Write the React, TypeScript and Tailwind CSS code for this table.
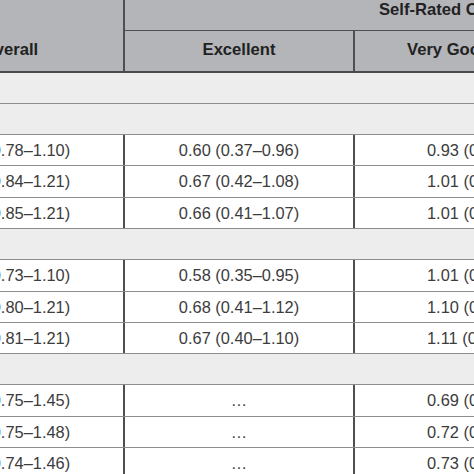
import React from 'react';

type Row =
  | { kind: 'group' }
  | { kind: 'data'; overall: string; excellent: string; veryGood: string };

const rows: Row[] = [
  { kind: 'group' },
  { kind: 'group' },
  { kind: 'data', overall: '0.93 (0.78–1.10)', excellent: '0.60 (0.37–0.96)', veryGood: '0.93 (0.74–1.16)' },
  { kind: 'data', overall: '1.01 (0.84–1.21)', excellent: '0.67 (0.42–1.08)', veryGood: '1.01 (0.80–1.27)' },
  { kind: 'data', overall: '1.01 (0.85–1.21)', excellent: '0.66 (0.41–1.07)', veryGood: '1.01 (0.80–1.27)' },
  { kind: 'group' },
  { kind: 'data', overall: '0.90 (0.73–1.10)', excellent: '0.58 (0.35–0.95)', veryGood: '1.01 (0.79–1.29)' },
  { kind: 'data', overall: '0.99 (0.80–1.21)', excellent: '0.68 (0.41–1.12)', veryGood: '1.10 (0.86–1.41)' },
  { kind: 'data', overall: '0.99 (0.81–1.21)', excellent: '0.67 (0.40–1.10)', veryGood: '1.11 (0.86–1.43)' },
  { kind: 'group' },
  { kind: 'data', overall: '1.04 (0.75–1.45)', excellent: '…', veryGood: '0.69 (0.41–1.16)' },
  { kind: 'data', overall: '1.05 (0.75–1.48)', excellent: '…', veryGood: '0.72 (0.43–1.21)' },
  { kind: 'data', overall: '1.04 (0.74–1.46)', excellent: '…', veryGood: '0.73 (0.43–1.23)' },
];

export default function App() {
  return (
    <div className="w-[474px] h-[474px] overflow-hidden bg-white font-['Liberation_Sans',Arial,sans-serif]">
      <div className="ml-[-103px] w-[760px]">
        {/* Header */}
        <div className="flex bg-[#b4b5b9] border-b-2 border-[#4a4a4a] text-[16.6px] font-bold text-[#222]">
          <div className="w-[228px] shrink-0 border-r-2 border-[#4f4f4f] flex flex-col">
            <div className="h-[31px]" />
            <div className="h-[39.5px] flex items-center justify-center leading-none">Overall</div>
          </div>
          <div className="flex-1 flex flex-col">
            <div className="h-[31px] border-b-[1.5px] border-[#4f4f4f] pl-[254px] pt-[2px] leading-none whitespace-nowrap">
              Self-Rated Overall Health
            </div>
            <div className="h-[39.5px] flex leading-none">
              <div className="w-[230px] shrink-0 border-r-2 border-[#4f4f4f] flex items-center justify-center">
                Excellent
              </div>
              <div className="flex-1 flex items-center pl-[52px] whitespace-nowrap">Very Good</div>
            </div>
          </div>
        </div>

        {/* Body */}
        {rows.map((r, i) =>
          r.kind === 'group' ? (
            <div key={i} className="h-[31.3px] bg-[#ededed] border-b-[1.5px] border-[#8e8e8e]" />
          ) : (
            <div
              key={i}
              className="h-[31.3px] flex border-b-[1.5px] border-[#8e8e8e] text-[16.4px] text-[#3c3c3c] leading-none whitespace-nowrap"
            >
              <div className="w-[228px] shrink-0 border-r-2 border-[#4f4f4f] flex items-center justify-center">
                {r.overall}
              </div>
              <div className="w-[230px] shrink-0 border-r-2 border-[#4f4f4f] flex items-center justify-center">
                {r.excellent}
              </div>
              <div className="flex-1 flex items-center pl-[72px]">{r.veryGood}</div>
            </div>
          )
        )}
      </div>
    </div>
  );
}
